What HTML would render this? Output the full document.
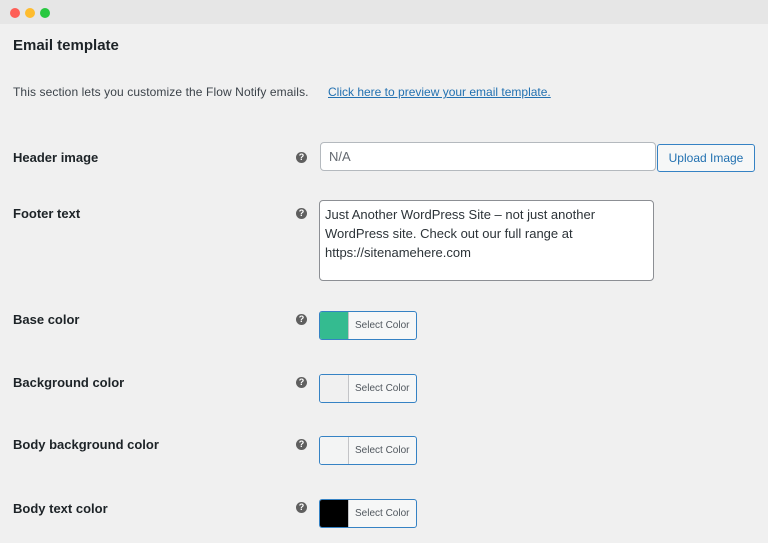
<!DOCTYPE html><html><head><style>
body{margin:0;width:768px;height:543px;overflow:hidden;background:#f0f0f0;font-family:"Liberation Sans",sans-serif;color:#1d2327;position:relative}
.bar{position:absolute;left:0;top:0;width:768px;height:24px;background:#e6e6e6}
.dot{position:absolute;top:8px;width:10px;height:10px;border-radius:50%}
.a{position:absolute}
.lbl{position:absolute;left:13px;font-size:13px;font-weight:bold;color:#1d2327}
.q{position:absolute;left:296px;width:11px;height:11px;border-radius:50%;background:#5f5f5f;color:#fff;font-size:9px;font-weight:bold;text-align:center;line-height:11px}
.cb{position:absolute;left:319px;width:96px;height:27px;border:1px solid #3582c4;border-radius:3px;background:#f6f7f7;overflow:hidden}
.cb i{position:absolute;left:0;top:0;width:28px;height:27px;border-right:1px solid #c3c4c7}
.cb span{position:absolute;left:35px;top:8px;font-size:10px;color:#50575e}
</style></head><body>
<div class="bar"></div>
<div class="dot" style="left:10px;background:#fe5f57"></div>
<div class="dot" style="left:25px;background:#febc2e"></div>
<div class="dot" style="left:40px;background:#28c840"></div>
<div class="a" style="left:13px;top:37px;font-size:15px;font-weight:600">Email template</div>
<div class="a" style="left:13px;top:85px;font-size:12px;color:#3c434a;letter-spacing:0.1px">This section lets you customize the Flow Notify emails.</div>
<div class="a" style="left:328px;top:85px;font-size:12px;color:#2271b1;text-decoration:underline">Click here to preview your email template.</div>
<div class="lbl" style="top:150px">Header image</div>
<div class="lbl" style="top:206px">Footer text</div>
<div class="lbl" style="top:312px">Base color</div>
<div class="lbl" style="top:375px">Background color</div>
<div class="lbl" style="top:437px">Body background color</div>
<div class="lbl" style="top:501px">Body text color</div>
<div class="q" style="top:152px">?</div>
<div class="q" style="top:208px">?</div>
<div class="q" style="top:314px">?</div>
<div class="q" style="top:377px">?</div>
<div class="q" style="top:439px">?</div>
<div class="q" style="top:502px">?</div>
<div class="a" style="left:320px;top:142px;width:334px;height:27px;background:#fff;border:1px solid #b4b9be;border-radius:4px"><span style="position:absolute;left:8px;top:6px;font-size:13px;color:#646970">N/A</span></div>
<div class="a" style="left:657px;top:144px;width:96px;height:26px;background:#f6f7f7;border:1px solid #3582c4;border-radius:3px;font-size:12px;color:#2271b1;text-align:center;line-height:26px">Upload Image</div>
<div class="a" style="left:319px;top:200px;width:333px;height:79px;background:#fff;border:1px solid #8c8f94;border-radius:4px"><div style="padding:4px 5px;font-size:13px;line-height:19px;color:#2c3338">Just Another WordPress Site – not just another WordPress site. Check out our full range at https://sitenamehere.com</div></div>
<div class="cb" style="top:311px"><i style="background:#34bb90"></i><span>Select Color</span></div>
<div class="cb" style="top:374px"><i style="background:#f0f0f0"></i><span>Select Color</span></div>
<div class="cb" style="top:436px"><i style="background:#f3f4f4"></i><span>Select Color</span></div>
<div class="cb" style="top:499px"><i style="background:#000"></i><span>Select Color</span></div>
</body></html>
